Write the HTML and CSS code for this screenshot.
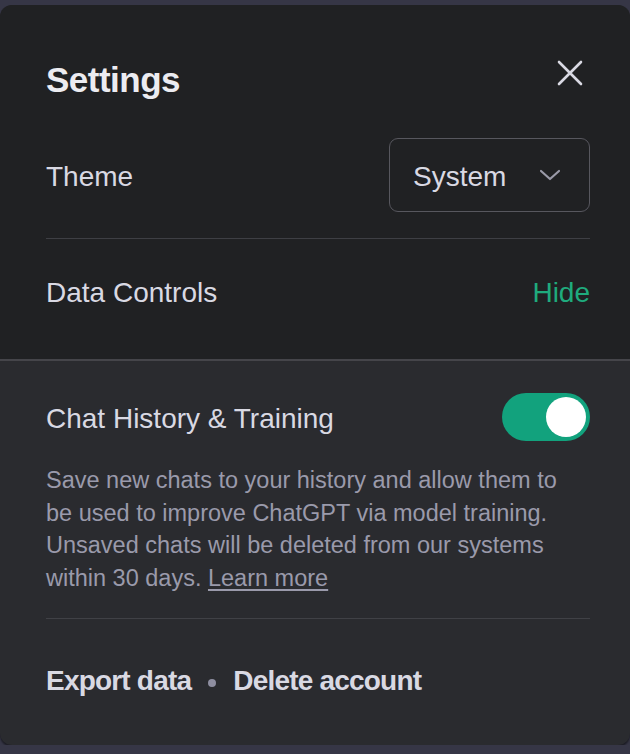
FILE: index.html
```html
<!DOCTYPE html>
<html lang="en">
<head>
<meta charset="utf-8">
<title>Settings</title>
<link rel="stylesheet" href="styles.css">
</head>
<body>
	<div class="dialog">
		<div class="top">
			<div class="head">
				<h1 class="title">Settings</h1>
				<button class="close" type="button" aria-label="Close">
					<svg width="28" height="28" viewBox="0 0 28 28" fill="none" stroke="currentColor" stroke-width="2.6" stroke-linecap="round">
						<path d="M3 3L25 25M25 3L3 25"/>
					</svg>
				</button>
			</div>

			<div class="row row-theme">
				<span class="label">Theme</span>
				<div class="select">
					<span>System</span>
					<svg width="22" height="14" viewBox="0 0 22 14" fill="none" stroke="currentColor" stroke-width="2.2" stroke-linecap="round" stroke-linejoin="round">
						<path d="M2 3L11 11L20 3"/>
					</svg>
				</div>
			</div>

			<div class="row row-data">
				<span class="label">Data Controls</span>
				<a class="hide" href="#">Hide</a>
			</div>
		</div>

		<div class="bottom">
			<div class="row row-history">
				<span class="label">Chat History &amp; Training</span>
				<span class="toggle"><span class="knob"></span></span>
			</div>
			<div class="desc">
				<p>Save new chats to your history and allow them to be used to improve ChatGPT via model training. Unsaved chats will be deleted from our systems within 30 days. <a href="#">Learn more</a></p>
			</div>

			<div class="actions">
				<a href="#">Export data</a>
				<span class="dot"></span>
				<a href="#">Delete account</a>
			</div>
		</div>
	</div>
</body>
</html>
```

FILE: styles.css
```css
* {
	box-sizing: border-box;
}
body {
	margin: 0;
	background: #363646;
	font-family: "Liberation Sans", Arial, sans-serif;
	color: #d9d9e3;
}
.dialog {
	margin-top: 5px;
	width: 630px;
	height: 740px;
	border-radius: 12px;
	overflow: hidden;
	background: #2a2b2f;
	box-shadow: 0 2px 2px rgba(0,0,0,0.5);
}
.top {
	background: #202123;
	padding: 0 40px 0 46px;
	border-bottom: 2px solid #45454a;
}
.head {
	display: flex;
	justify-content: space-between;
	align-items: flex-start;
	padding-top: 52px;
}
.title {
	margin: 0;
	font-size: 35px;
	line-height: 46px;
	font-weight: bold;
	letter-spacing: -0.5px;
	color: #ececf1;
}
.close {
	margin: 2px 6px 0 0;
	padding: 0;
	width: 28px;
	height: 28px;
	border: 0;
	background: none;
	color: #d9d9e3;
	display: flex;
}
.row {
	display: flex;
	justify-content: space-between;
	align-items: center;
}
.label {
	font-size: 28px;
	line-height: 34px;
}
.row-theme {
	margin-top: 35px;
	padding-bottom: 26px;
	border-bottom: 1px solid #3e3f44;
}
.row-theme .label {
	margin-top: 4px;
}
.select {
	width: 201px;
	height: 74px;
	border: 1.5px solid #57575e;
	border-radius: 9px;
	display: flex;
	align-items: center;
	justify-content: space-between;
	padding: 3px 28px 0 23px;
	font-size: 28px;
	color: #d9d9e3;
}
.select svg {
	color: #9a9aa8;
	margin-top: -4px;
}
.row-data {
	padding: 37px 0 49px;
}
.hide {
	font-size: 28px;
	line-height: 34px;
	color: #1fab7d;
	text-decoration: none;
}
.bottom {
	padding: 0 40px 0 46px;
}
.row-history {
	padding-top: 32px;
}
.row-history .label {
	margin-top: 3px;
}
.toggle {
	width: 88px;
	height: 48px;
	border-radius: 24px;
	background: #12a27d;
	display: flex;
	align-items: center;
	justify-content: flex-end;
	padding-right: 4px;
}
.knob {
	width: 40px;
	height: 40px;
	border-radius: 50%;
	background: #fff;
}
.desc {
	margin-top: 23px;
	padding-bottom: 24px;
	border-bottom: 1px solid #404146;
}
.desc p {
	margin: 0;
	max-width: 525px;
	font-size: 23.5px;
	line-height: 32.5px;
	color: #9a9aab;
}
.desc a {
	color: #9a9aab;
	text-decoration: underline;
	text-underline-offset: 3px;
}
.actions {
	display: flex;
	align-items: center;
	gap: 17px;
	padding-top: 45px;
}
.actions a {
	font-size: 28px;
	line-height: 34px;
	font-weight: bold;
	letter-spacing: -0.8px;
	color: #d9d9e3;
	text-decoration: none;
}
.dot {
	width: 8px;
	height: 8px;
	border-radius: 50%;
	background: #8e8ea0;
	margin-top: 3px;
}
```
